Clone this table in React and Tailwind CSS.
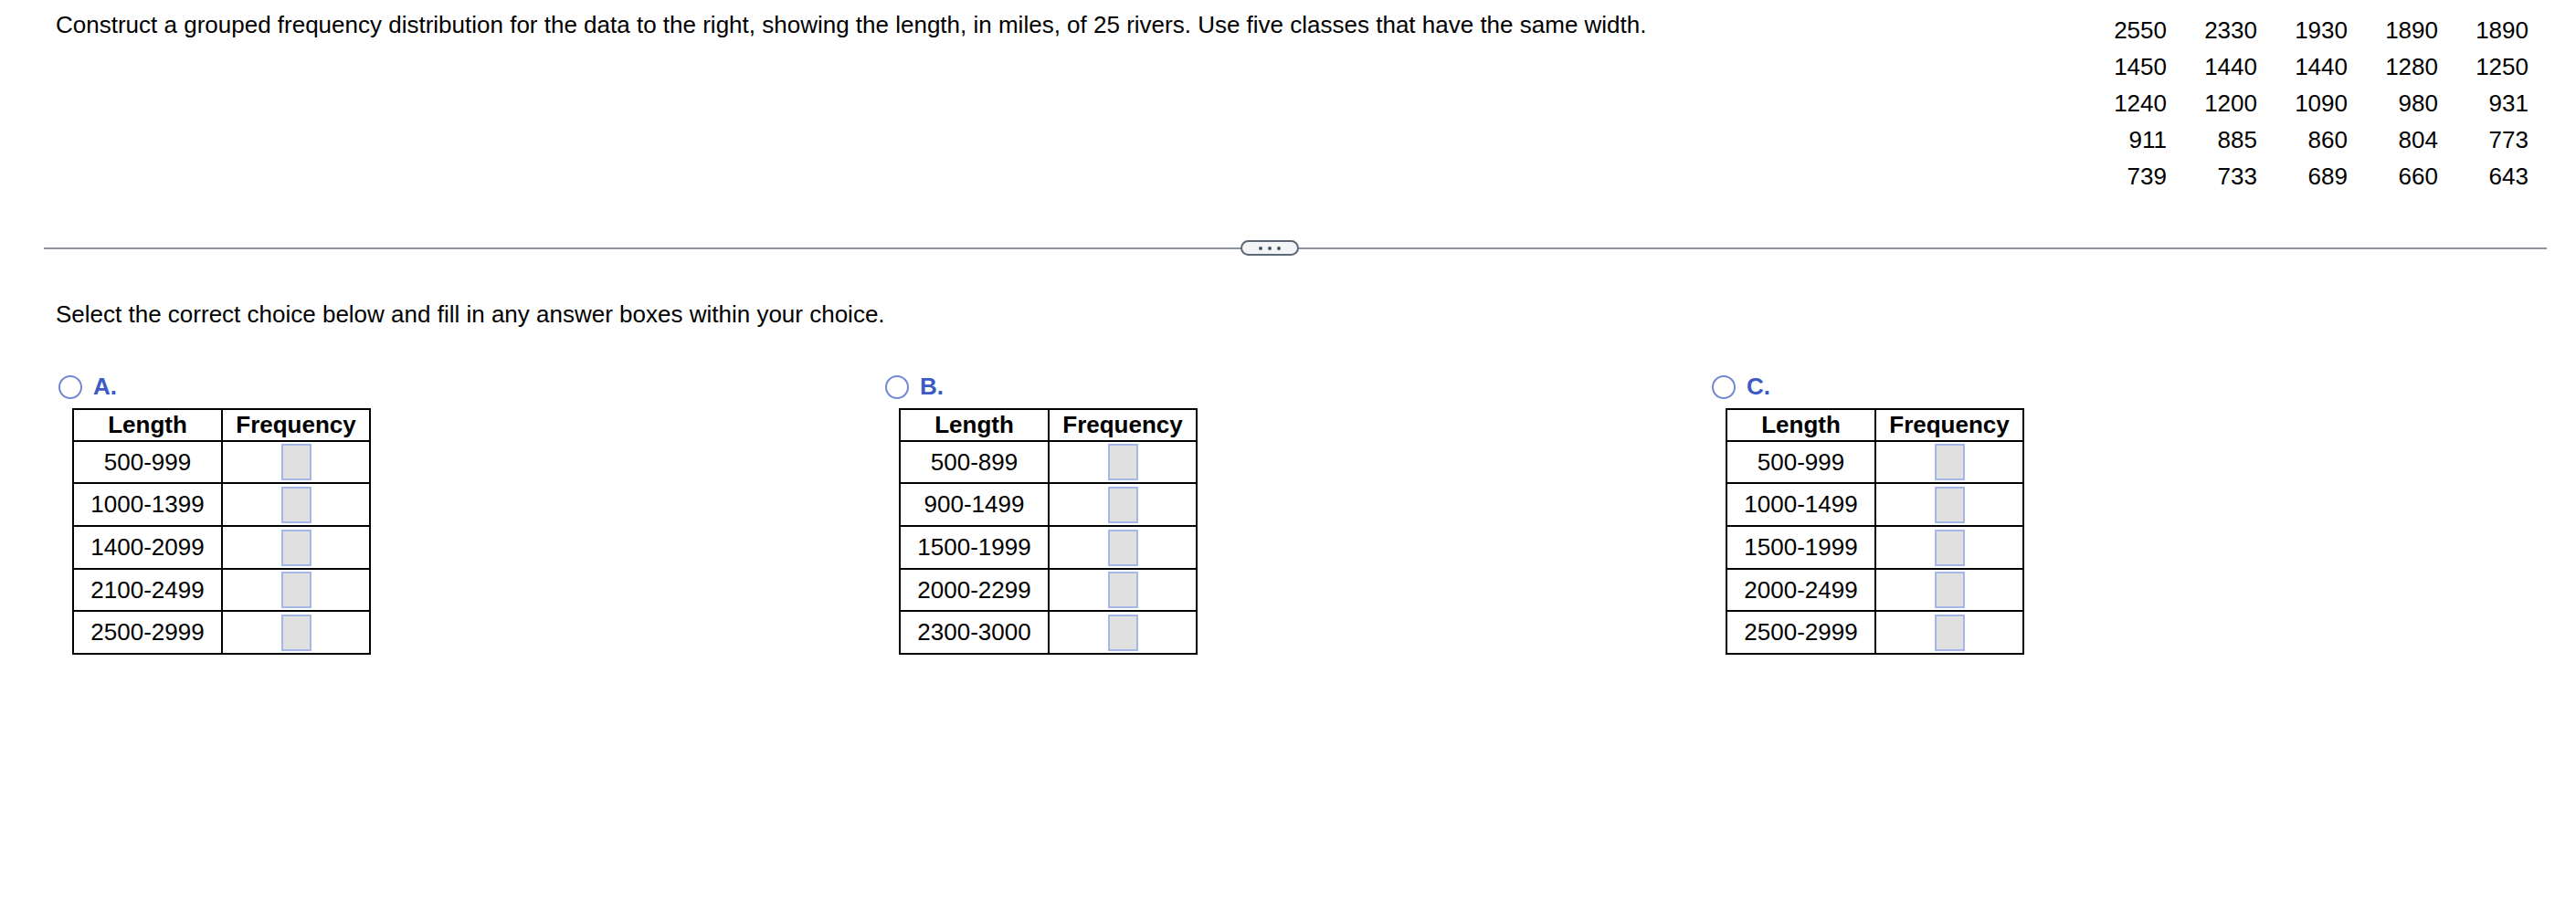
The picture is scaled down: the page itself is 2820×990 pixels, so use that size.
import React from "react";

const data = [
  ["2550", "2330", "1930", "1890", "1890"],
  ["1450", "1440", "1440", "1280", "1250"],
  ["1240", "1200", "1090", "980", "931"],
  ["911", "885", "860", "804", "773"],
  ["739", "733", "689", "660", "643"],
];

const options = [
  { letter: "A.", rows: ["500-999", "1000-1399", "1400-2099", "2100-2499", "2500-2999"] },
  { letter: "B.", rows: ["500-899", "900-1499", "1500-1999", "2000-2299", "2300-3000"] },
  { letter: "C.", rows: ["500-999", "1000-1499", "1500-1999", "2000-2499", "2500-2999"] },
];

const rowHeights = ["h-[44px]", "h-[45px]", "h-[45px]", "h-[44px]", "h-[45px]"];

function Option({ letter, rows }) {
  return (
    <div className="w-[905px] flex flex-col">
      <div className="flex items-center gap-[12px] h-[29px]">
        <span className="w-[26px] h-[26px] rounded-full border-2 border-[#7088d6] bg-white" />
        <span className="font-bold text-[#3c5bc4] leading-[29px]">{letter}</span>
      </div>
      <div className="mt-[9px] ml-[15px] w-[327px] grid grid-cols-[161px_160px] gap-[2px] border-2 border-black bg-black">
        <div className="h-[33px] bg-white flex items-center justify-center font-bold">Length</div>
        <div className="h-[33px] bg-white flex items-center justify-center font-bold">Frequency</div>
        {rows.map((r, i) => (
          <React.Fragment key={i}>
            <div className={`${rowHeights[i]} bg-white flex items-center justify-center`}>{r}</div>
            <div className={`${rowHeights[i]} bg-white flex items-center justify-center`}>
              <span className="w-[33px] h-[40px] bg-[#e0e0e0] border-2 border-[#a4b7e6]" />
            </div>
          </React.Fragment>
        ))}
      </div>
    </div>
  );
}

export default function App() {
  return (
    <div className="w-[2820px] h-[990px] bg-white text-black text-[26px] font-['Liberation_Sans',Arial,sans-serif]">
      <div className="flex justify-between pl-[61px] pr-[52px]">
        <p className="pt-[13px] leading-[29px]">
          Construct a grouped frequency distribution for the data to the right, showing the length, in miles, of 25 rivers. Use five classes that have the same width.
        </p>
        <div className="pt-[13px] grid grid-cols-[repeat(5,99px)] leading-[40px] text-right">
          {data.flat().map((v, i) => (
            <span key={i}>{v}</span>
          ))}
        </div>
      </div>

      <div className="relative mt-[58px] ml-[48px] w-[2740px] h-[2px] bg-[#8b939f]">
        <div className="absolute left-[1310px] top-[-8px] w-[64px] h-[17px] rounded-full border-2 border-[#5d6877] bg-[#f3f4f6] flex items-center justify-center gap-[6px]">
          <span className="w-[4px] h-[4px] rounded-full bg-[#4a5260]" />
          <span className="w-[4px] h-[4px] rounded-full bg-[#4a5260]" />
          <span className="w-[4px] h-[4px] rounded-full bg-[#4a5260]" />
        </div>
      </div>

      <p className="mt-[57px] pl-[61px] leading-[29px]">
        Select the correct choice below and fill in any answer boxes within your choice.
      </p>

      <div className="mt-[50px] pl-[64px] flex">
        {options.map((o) => (
          <Option key={o.letter} letter={o.letter} rows={o.rows} />
        ))}
      </div>
    </div>
  );
}
